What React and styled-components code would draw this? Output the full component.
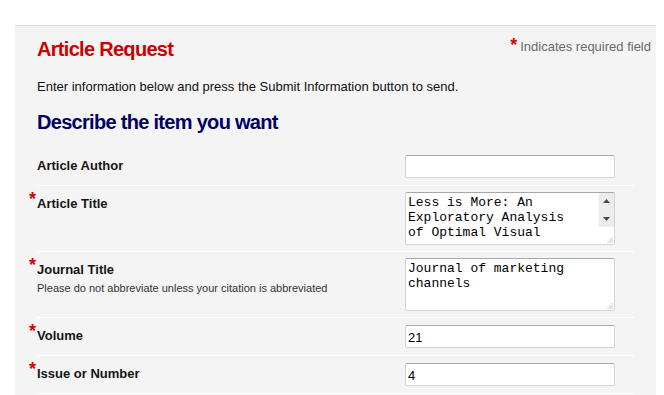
import React from "react";
import styled, { createGlobalStyle } from "styled-components";

const GlobalStyle = createGlobalStyle`
  html, body { margin: 0; padding: 0; background: #fff; }
  body { font-family: "Liberation Sans", Arial, sans-serif; }
`;

const Page = styled.div`
  padding: 25px 8px 0 15px;
`;

const Panel = styled.section`
  background: #f4f4f4;
  border-top: 1px solid #dcdcdc;
  padding: 11px 22px 40px 22px;
`;

const Header = styled.div`
  display: flex;
  justify-content: space-between;
  align-items: flex-start;
  margin-right: -17px;
`;

const Title = styled.h1`
  margin: 0;
  font-size: 20px;
  line-height: 24px;
  font-weight: bold;
  color: #cc0000;
  letter-spacing: -0.7px;
`;

const Note = styled.div`
  margin-top: 1px;
  font-size: 13px;
  line-height: 15px;
  color: #6a6a6a;
`;

const NoteStar = styled.span`
  color: #dd0000;
  font-size: 18px;
  font-weight: bold;
  line-height: 15px;
  margin-right: 3px;
`;

const Intro = styled.p`
  margin: 18px 0 0;
  font-size: 13px;
  line-height: 15px;
  color: #111;
`;

const Heading = styled.h2`
  margin: 16px 0 0;
  font-size: 20px;
  line-height: 24px;
  font-weight: bold;
  color: #000066;
  letter-spacing: -0.7px;
`;

const Form = styled.div`
  margin-top: 14px;
`;

const Row = styled.div`
  display: grid;
  grid-template-columns: 1fr 210px;
  padding: 6px 19px 6px 0;
  border-bottom: 1px solid #fff;
`;

const LabelCol = styled.div`
  display: flex;
  flex-direction: column;
`;

const Label = styled.label`
  position: relative;
  padding-top: 4px;
  font-size: 13px;
  line-height: 15px;
  font-weight: bold;
  color: #151515;
`;

const Required = styled.span`
  position: absolute;
  right: 100%;
  top: -1px;
  margin-right: 1px;
  color: #dd0000;
  font-size: 18px;
  line-height: 16px;
  font-weight: bold;
`;

const Help = styled.div`
  margin-top: 5px;
  font-size: 11px;
  line-height: 13px;
  color: #333;
`;

const TextInput = styled.input`
  box-sizing: border-box;
  width: 210px;
  height: 23px;
  margin: 1px 0;
  padding: 1px 2px 0;
  border: 1px solid #d4d4d4;
  border-top-color: #a8a8a8;
  border-radius: 2px;
  background: #fff;
  font-family: "Liberation Sans", Arial, sans-serif;
  font-size: 13px;
  color: #000;
  outline: none;
`;

const AreaBox = styled.div`
  position: relative;
  width: 210px;
  height: 53px;
`;

const Area = styled.textarea`
  box-sizing: border-box;
  display: block;
  width: 100%;
  height: 100%;
  margin: 0;
  padding: 2px ${(p) => (p.$scroll ? "32px" : "6px")} 2px 2px;
  border: 1px solid #d4d4d4;
  border-top-color: #a8a8a8;
  border-radius: 2px;
  background: #fff;
  font-family: "Liberation Mono", "Courier New", monospace;
  font-size: 13px;
  line-height: 15px;
  color: #000;
  resize: none;
  overflow: hidden;
  outline: none;
`;

const ScrollBar = styled.div`
  position: absolute;
  top: 1px;
  right: 1px;
  width: 16px;
  height: 34px;
  background: #ececec;
  border-left: 1px solid #f6f6f6;
  display: flex;
  flex-direction: column;
  justify-content: space-between;
  align-items: center;
  padding: 6px 0 6px;
  box-sizing: border-box;
`;

const Grip = styled.svg`
  position: absolute;
  right: 2px;
  bottom: 2px;
`;

const Arrow = ({ up }) => (
  <svg width="7" height="4" viewBox="0 0 7 4">
    <path d={up ? "M0 4 L3.5 0 L7 4 Z" : "M0 0 L3.5 4 L7 0 Z"} fill="#4a4a4a" />
  </svg>
);

const GripIcon = () => (
  <Grip width="6" height="6" viewBox="0 0 6 6">
    {[
      [5, 1],
      [3, 3],
      [5, 3],
      [1, 5],
      [3, 5],
      [5, 5],
    ].map(([x, y]) => (
      <rect key={`${x}-${y}`} x={x - 0.5} y={y - 0.5} width="1" height="1" fill="#9a9a9a" />
    ))}
  </Grip>
);

const TextArea = ({ value, scroll }) => (
  <AreaBox>
    <Area $scroll={scroll} defaultValue={value} />
    {scroll && (
      <ScrollBar>
        <Arrow up />
        <Arrow />
      </ScrollBar>
    )}
    <GripIcon />
  </AreaBox>
);

const Field = ({ label, required, help, children }) => (
  <Row>
    <LabelCol>
      <Label>
        {required && <Required>*</Required>}
        {label}
      </Label>
      {help && <Help>{help}</Help>}
    </LabelCol>
    <div>{children}</div>
  </Row>
);

export default function App() {
  return (
    <>
      <GlobalStyle />
      <Page>
        <Panel>
          <Header>
            <Title>Article Request</Title>
            <Note>
              <NoteStar>*</NoteStar>Indicates required field
            </Note>
          </Header>
          <Intro>Enter information below and press the Submit Information button to send.</Intro>
          <Heading>Describe the item you want</Heading>
          <Form>
            <Field label="Article Author">
              <TextInput defaultValue="" />
            </Field>
            <Field label="Article Title" required>
              <TextArea scroll value="Less is More: An Exploratory Analysis of Optimal Visual" />
            </Field>
            <Field
              label="Journal Title"
              required
              help="Please do not abbreviate unless your citation is abbreviated"
            >
              <TextArea value="Journal of marketing channels" />
            </Field>
            <Field label="Volume" required>
              <TextInput defaultValue="21" />
            </Field>
            <Field label="Issue or Number" required>
              <TextInput defaultValue="4" />
            </Field>
          </Form>
        </Panel>
      </Page>
    </>
  );
}
